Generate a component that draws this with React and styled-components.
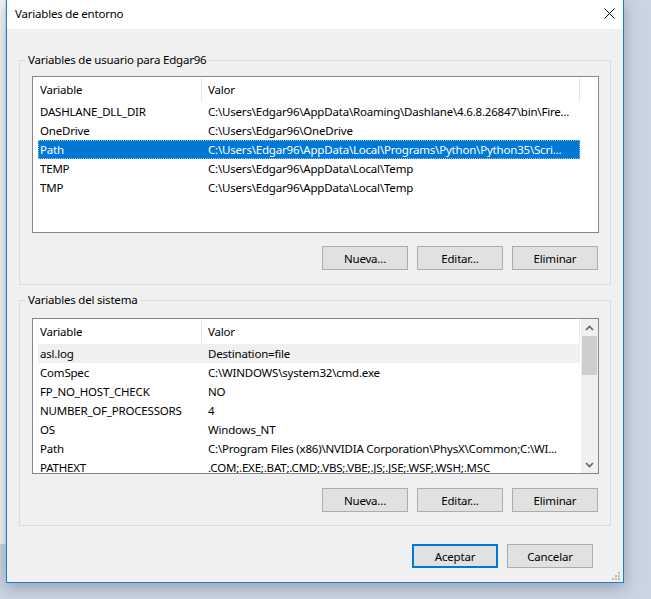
import React from 'react';
import styled, { createGlobalStyle } from 'styled-components';

const uiFont = `"Segoe UI", "Noto Sans", "Liberation Sans", sans-serif`;

const userVars = [
  ['DASHLANE_DLL_DIR', 'C:\\Users\\Edgar96\\AppData\\Roaming\\Dashlane\\4.6.8.26847\\bin\\Fire...'],
  ['OneDrive', 'C:\\Users\\Edgar96\\OneDrive'],
  ['Path', 'C:\\Users\\Edgar96\\AppData\\Local\\Programs\\Python\\Python35\\Scri...'],
  ['TEMP', 'C:\\Users\\Edgar96\\AppData\\Local\\Temp'],
  ['TMP', 'C:\\Users\\Edgar96\\AppData\\Local\\Temp'],
];

const systemVars = [
  ['asl.log', 'Destination=file'],
  ['ComSpec', 'C:\\WINDOWS\\system32\\cmd.exe'],
  ['FP_NO_HOST_CHECK', 'NO'],
  ['NUMBER_OF_PROCESSORS', '4'],
  ['OS', 'Windows_NT'],
  ['Path', 'C:\\Program Files (x86)\\NVIDIA Corporation\\PhysX\\Common;C:\\WI...'],
  ['PATHEXT', '.COM;.EXE;.BAT;.CMD;.VBS;.VBE;.JS;.JSE;.WSF;.WSH;.MSC'],
];

function EnvDialog() {
  return (
    <Desktop>
      <GlobalStyle />
      <LeftStrip />
      <Window>
        <TitleBar>
          <Title>Variables de entorno</Title>
          <CloseButton>
            <svg width="11" height="11" viewBox="0 0 11 11">
              <path d="M0.5 0.5 L10.5 10.5 M10.5 0.5 L0.5 10.5" stroke="#000" strokeWidth="1" />
            </svg>
          </CloseButton>
        </TitleBar>

        <Body>
          <Group $pad="15px 11px 14px 12px">
            <Legend>Variables de usuario para Edgar96</Legend>
            <VarList rows={userVars} height={157} selected={2} />
            <ButtonRow $top={13}>
              <Button>Nueva...</Button>
              <Button>Editar...</Button>
              <Button>Eliminar</Button>
            </ButtonRow>
          </Group>

          <Group $pad="17px 11px 13px 12px" $top={15}>
            <Legend>Variables del sistema</Legend>
            <VarList rows={systemVars} height={156} hovered={0} scroll />
            <ButtonRow $top={14}>
              <Button>Nueva...</Button>
              <Button>Editar...</Button>
              <Button>Eliminar</Button>
            </ButtonRow>
          </Group>

          <Footer>
            <Button $primary>Aceptar</Button>
            <Button>Cancelar</Button>
          </Footer>
        </Body>

        <Grip width="8" height="8" viewBox="0 0 8 8">
          <rect x="6" y="0" width="2" height="2" />
          <rect x="3" y="3" width="2" height="2" />
          <rect x="6" y="3" width="2" height="2" />
          <rect x="0" y="6" width="2" height="2" />
          <rect x="3" y="6" width="2" height="2" />
          <rect x="6" y="6" width="2" height="2" />
        </Grip>
      </Window>
    </Desktop>
  );
}

function VarList({ rows, height, selected, hovered, scroll }) {
  return (
    <List $height={height}>
      <ListMain>
        <Header>
          <HeaderCell $w={169} $pad={7}>Variable</HeaderCell>
          <HeaderCell $w={378} $pad={6}>Valor</HeaderCell>
        </Header>
        <Rows>
          {rows.map(([name, value], i) => (
            <Row key={name + i} $selected={i === selected} $hovered={i === hovered}>
              <NameCell>{name}</NameCell>
              <ValueCell>{value}</ValueCell>
            </Row>
          ))}
        </Rows>
      </ListMain>
      {scroll && (
        <ScrollBar>
          <ScrollArrow>
            <svg width="9" height="6" viewBox="0 0 9 6">
              <polyline points="1,5 4.5,1.5 8,5" fill="none" stroke="#606060" strokeWidth="1.6" />
            </svg>
          </ScrollArrow>
          <Track>
            <Thumb />
          </Track>
          <ScrollArrow>
            <svg width="9" height="6" viewBox="0 0 9 6">
              <polyline points="1,1 4.5,4.5 8,1" fill="none" stroke="#606060" strokeWidth="1.6" />
            </svg>
          </ScrollArrow>
        </ScrollBar>
      )}
    </List>
  );
}

const GlobalStyle = createGlobalStyle`
  html, body {
    margin: 0;
    padding: 0;
  }
  body {
    background: #cbd4e1;
    font-family: ${uiFont};
    font-size: 11.5px;
    letter-spacing: -0.2px;
    color: #000;
    overflow: hidden;
  }
`;

const Desktop = styled.div`
  display: flex;
  align-items: flex-start;
  width: 651px;
  height: 599px;
  overflow: hidden;
  background: #cbd4e1;
`;

const LeftStrip = styled.div`
  width: 6px;
  height: 544px;
  flex-shrink: 0;
  background: #f4f4f4;
  box-sizing: border-box;
  border-right: 1px solid #e2e2e2;
`;

const Window = styled.div`
  position: relative;
  width: 618px;
  height: 583px;
  flex-shrink: 0;
  box-sizing: border-box;
  border: 1px solid #1a7fd4;
  border-top: none;
  background: #f0f0f0;
  display: flex;
  flex-direction: column;
  box-shadow: 0 4px 14px rgba(40, 60, 90, 0.35);
`;

const TitleBar = styled.div`
  height: 29px;
  flex-shrink: 0;
  background: #fff;
  display: flex;
  align-items: center;
  justify-content: space-between;
  padding-left: 8px;
`;

const Title = styled.span`
  line-height: 16px;
  margin-top: -1px;
`;

const CloseButton = styled.div`
  width: 28px;
  height: 27px;
  display: flex;
  align-items: center;
  justify-content: center;
  margin-top: -2px;
`;

const Body = styled.div`
  display: flex;
  flex-direction: column;
  padding: 31px 12px 0 12px;
`;

const Group = styled.div`
  position: relative;
  border: 1px solid #dcdcdc;
  padding: ${p => p.$pad};
  margin-top: ${p => p.$top || 0}px;
  display: flex;
  flex-direction: column;
`;

const Legend = styled.div`
  position: absolute;
  top: -9px;
  left: 5px;
  padding: 0 3px;
  line-height: 16px;
  background: #f0f0f0;
  white-space: nowrap;
`;

const List = styled.div`
  height: ${p => p.$height}px;
  box-sizing: border-box;
  border: 1px solid #828790;
  background: #fff;
  display: flex;
  overflow: hidden;
`;

const ListMain = styled.div`
  flex: 1;
  min-width: 0;
  display: flex;
  flex-direction: column;
`;

const Header = styled.div`
  height: 25px;
  flex-shrink: 0;
  display: flex;
`;

const HeaderCell = styled.div`
  width: ${p => p.$w}px;
  box-sizing: border-box;
  padding-left: ${p => p.$pad}px;
  margin-top: 1px;
  border-right: 1px solid #e5e5e5;
  display: flex;
  align-items: center;
  padding-bottom: 1px;
`;

const Rows = styled.div`
  padding-left: 5px;
  display: flex;
  flex-direction: column;
`;

const Row = styled.div`
  width: 542px;
  height: 19px;
  box-sizing: border-box;
  display: grid;
  grid-template-columns: 163px 379px;
  align-items: center;
  white-space: nowrap;
  background: ${p => (p.$selected ? '#0078d7' : p.$hovered ? '#f0f0f0' : 'transparent')};
  color: ${p => (p.$selected ? '#fff' : '#000')};
  border: 1px dotted ${p => (p.$selected ? '#8cc1ee' : 'transparent')};
`;

const NameCell = styled.span`
  padding-left: 1px;
  overflow: hidden;
`;

const ValueCell = styled.span`
  padding-left: 6px;
  overflow: hidden;
`;

const ScrollBar = styled.div`
  width: 17px;
  flex-shrink: 0;
  background: #f0f0f0;
  display: flex;
  flex-direction: column;
`;

const ScrollArrow = styled.div`
  height: 17px;
  display: flex;
  align-items: center;
  justify-content: center;
`;

const Track = styled.div`
  flex: 1;
  padding: 0 1px;
`;

const Thumb = styled.div`
  height: 39px;
  background: #cdcdcd;
`;

const ButtonRow = styled.div`
  display: flex;
  justify-content: flex-end;
  gap: 9px;
  margin-top: ${p => p.$top}px;
  margin-right: 1px;
`;

const Footer = styled.div`
  display: flex;
  justify-content: flex-end;
  gap: 9px;
  margin-top: 18px;
  padding-right: 18px;
`;

const Button = styled.button`
  width: 86px;
  height: 24px;
  box-sizing: border-box;
  padding: 0;
  font-family: ${uiFont};
  font-size: 11.5px;
  letter-spacing: -0.2px;
  color: #000;
  background: #e1e1e1;
  border: ${p => (p.$primary ? '2px solid #0078d7' : '1px solid #adadad')};
  border-radius: 0;
`;

const Grip = styled.svg`
  position: absolute;
  right: 3px;
  bottom: 2px;
  fill: #bcbcbc;
`;

export default EnvDialog;
